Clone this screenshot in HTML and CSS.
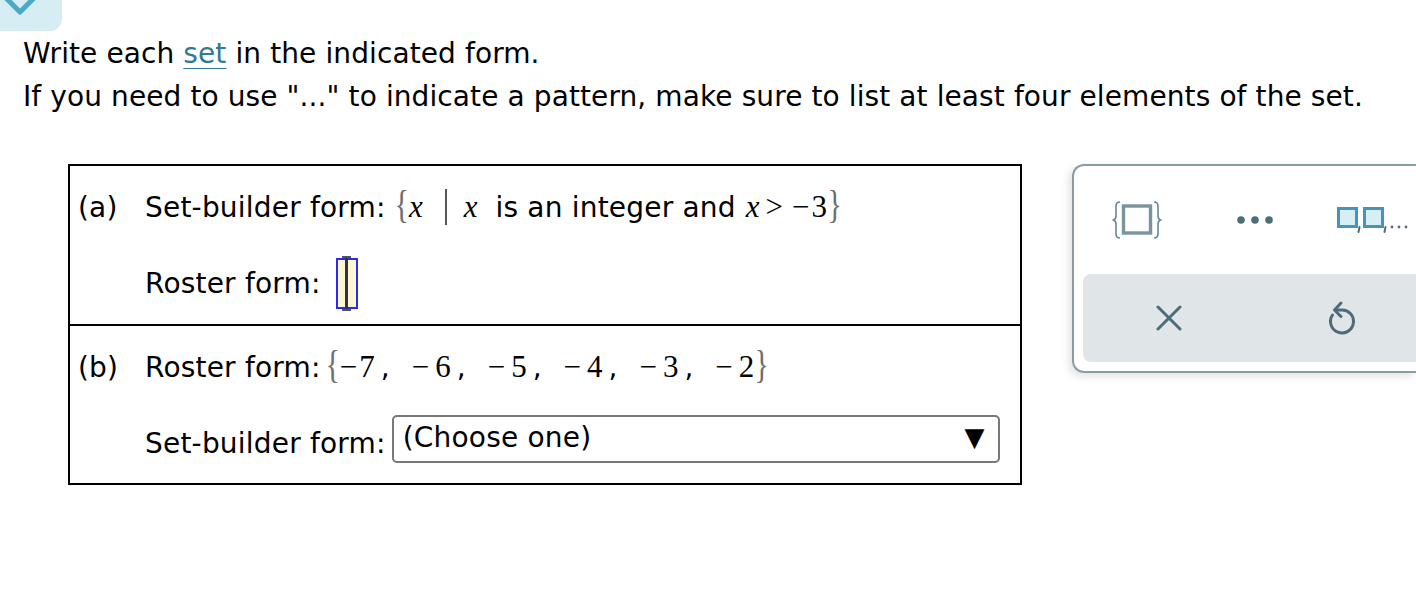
FILE: index.html
```html
<!DOCTYPE html>
<html>
<head>
<meta charset="utf-8">
<link rel="stylesheet" href="styles.css">
</head>
<body>
<div class="tab"><svg width="62" height="31" viewBox="0 0 62 31"><path d="M5 -3 L20 12 L35 -3" fill="none" stroke="#4aa8c9" stroke-width="5" stroke-linecap="round" stroke-linejoin="round"/></svg></div>
<div class="page">
  <div class="main">
    <p class="instr">Write each <a class="link" href="#">set</a> in the indicated form.</p>
    <p class="instr">If you need to use "..." to indicate a pattern, make sure to list at least four elements of the set.</p>
    <div class="table">
      <div class="row">
        <div class="line">
          <span class="lbl">(a)</span>
          <span>Set-builder form:</span>
          <span class="math m-a"><span class="brace">{</span><i>x</i><span class="bar"></span><i>x</i></span>
          <span class="gap">is an integer and</span>
          <span class="math m-b"><i>x</i><span class="op">&gt;</span><span class="neg tight">−</span>3<span class="brace">}</span></span>
        </div>
        <div class="line sub">
          <span>Roster form:</span>
          <span class="input"><span class="caret"></span></span>
        </div>
      </div>
      <div class="row">
        <div class="line">
          <span class="lbl">(b)</span>
          <span>Roster form:</span>
          <span class="math m-c"><span class="brace">{</span><span class="neg tight">−</span>7<span class="c">,</span><span class="neg">−</span>6<span class="c">,</span><span class="neg">−</span>5<span class="c">,</span><span class="neg">−</span>4<span class="c">,</span><span class="neg">−</span>3<span class="c">,</span><span class="neg">−</span>2<span class="brace">}</span></span>
        </div>
        <div class="line sub">
          <span>Set-builder form:</span>
          <span class="select"><span>(Choose one)</span><span class="tri">▼</span></span>
        </div>
      </div>
    </div>
  </div>
  <div class="panel">
    <div class="tools">
      <span class="tool"><svg width="50" height="40" viewBox="0 0 50 40"><path d="M8 2 Q4 2 4 6 L4 16 Q4 19 1.5 20 Q4 21 4 24 L4 34 Q4 38 8 38" fill="none" stroke="#6a8591" stroke-width="1.6"/><path d="M42 2 Q46 2 46 6 L46 16 Q46 19 48.5 20 Q46 21 46 24 L46 34 Q46 38 42 38" fill="none" stroke="#6a8591" stroke-width="1.6"/><rect x="11.5" y="6" width="27" height="27" fill="none" stroke="#7a939e" stroke-width="3.4"/></svg></span>
      <span class="tool"><svg width="38" height="12" viewBox="0 0 38 12"><circle cx="5" cy="6" r="3.8" fill="#4f6e7b"/><circle cx="19" cy="6" r="3.8" fill="#4f6e7b"/><circle cx="33" cy="6" r="3.8" fill="#4f6e7b"/></svg></span>
      <span class="tool t3"><svg width="74" height="28" viewBox="0 0 74 28"><rect x="1.5" y="2.5" width="18" height="18" fill="#d6eef4" stroke="#4497b4" stroke-width="3"/><path d="M22.5 21 L21.5 26" stroke="#4f6e7b" stroke-width="2" stroke-linecap="round"/><rect x="27.5" y="2.5" width="18" height="18" fill="#d6eef4" stroke="#4497b4" stroke-width="3"/><path d="M48.5 21 L47.5 26" stroke="#4f6e7b" stroke-width="2" stroke-linecap="round"/><circle cx="55" cy="21" r="1.4" fill="#4f6e7b"/><circle cx="62" cy="21" r="1.4" fill="#4f6e7b"/><circle cx="69" cy="21" r="1.4" fill="#4f6e7b"/></svg></span>
    </div>
    <div class="actions">
      <span class="act"><svg width="26" height="26" viewBox="0 0 26 26"><path d="M2 2 L24 24 M24 2 L2 24" stroke="#4c6c78" stroke-width="3" stroke-linecap="round"/></svg></span>
      <span class="act"><svg width="30" height="36" viewBox="0 0 30 36"><path d="M6.5 15 A 11.5 11.5 0 1 0 15 10 L11 10" fill="none" stroke="#4c6c78" stroke-width="3" stroke-linecap="round"/><path d="M15 3 L8.5 10 L15 16.5" fill="none" stroke="#4c6c78" stroke-width="3" stroke-linecap="round" stroke-linejoin="round"/></svg></span>
    </div>
  </div>
</div>
</body>
</html>
```
FILE: styles.css
```css
html, body { margin: 0; padding: 0; background: #fff; }
body { font-family: "DejaVu Sans", Verdana, sans-serif; color: #000; overflow: hidden; width: 1416px; height: 594px; }
.tab { width: 62px; height: 31px; background: #d5edf3; border-bottom-right-radius: 12px; }
.tab svg { display: block; }
.page { display: flex; align-items: flex-start; }
.main { padding-left: 23px; width: 999px; flex: none; }
.instr { margin: 0; font-size: 28px; line-height: 43px; white-space: nowrap; letter-spacing: 0.1px; }
.instr:first-child { margin-top: 1px; }
.link { color: #2f7a96; text-decoration: underline; text-decoration-thickness: 1px; text-underline-offset: 5px; }
.table { margin-top: 46px; margin-left: 45px; width: 950px; border: 2px solid #000; }
.row { height: 158px; padding: 18px 0 0 8px; box-sizing: border-box; }
.row + .row { border-top: 2px solid #000; height: 159px; }
.line { display: flex; align-items: center; font-size: 28px; letter-spacing: 0.2px; height: 46px; white-space: nowrap; }
.lbl { width: 67px; }
.sub { margin-top: 30px; padding-left: 67px; }
.math { font-family: "Liberation Serif", "Times New Roman", serif; font-size: 31px; display: inline-flex; align-items: center; letter-spacing: 0; }
.math i { font-style: italic; }
.m-a { margin-left: 8px; }
.m-b { margin-left: 10px; }
.m-c { margin-left: 4px; }
.brace { color: #6e6e6e; font-size: 40px; transform: scaleX(0.75); display: inline-block; line-height: 1; position: relative; top: -2px; margin: 0 -2px; }
.bar { display: inline-block; width: 2px; height: 36px; background: #555; margin: 0 17px 0 22px; }
.gap { margin-left: 18px; }
.op { margin: 0 9px 0 6px; }
.neg { margin-right: 6px; }
.neg.tight { margin-right: 2px; }
.c { font-family: "DejaVu Sans", Verdana, sans-serif; font-size: 28px; margin: 0 22px 0 6px; }
.input { margin-left: 15px; width: 18px; height: 47px; border: 2px solid #2b2bf0; background: #fbf6d4; position: relative; display: inline-block; }
.caret { position: absolute; left: 7px; top: -4px; width: 3px; height: 55px; background: #333; }
.caret::before, .caret::after { content: ""; position: absolute; left: -3px; width: 9px; height: 2px; background: #555; }
.caret::before { top: 0; }
.caret::after { bottom: 0; }
.select { margin-left: 6px; width: 608px; height: 48px; border: 2px solid #777; border-radius: 5px; display: flex; align-items: center; justify-content: space-between; padding: 0 13px 4px 9px; box-sizing: border-box; margin-top: -8px; }
.tri { font-size: 26px; }
.panel { margin-top: 133px; margin-left: 50px; width: 344px; flex: none; height: 209px; border: 2px solid #8b9ca5; border-right: none; border-radius: 12px 0 0 12px; box-shadow: -3px 3px 8px rgba(0,0,0,0.12); padding: 0 0 9px 9px; box-sizing: border-box; display: flex; flex-direction: column; overflow: hidden; }
.tools { display: grid; grid-template-columns: 125px 112px 104px; align-items: center; height: 108px; margin-left: -9px; }
.tool { display: flex; justify-content: center; }
.t3 { justify-content: flex-start; padding-left: 26px; }
.actions { flex: 1; background: #e0e5e8; border-radius: 8px 0 0 8px; display: grid; grid-template-columns: 172px 172px; align-items: center; }
.act { display: flex; justify-content: center; }
```
